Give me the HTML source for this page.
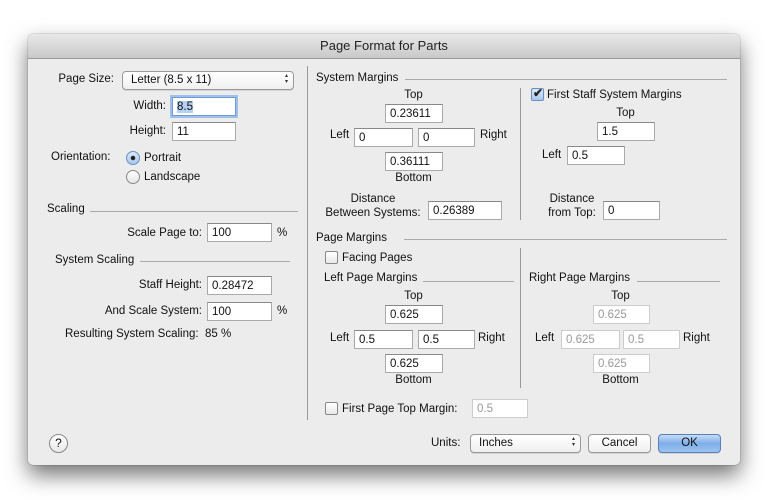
<!DOCTYPE html>
<html><head><style>
body{margin:0;width:768px;height:502px;background:#fff;position:relative;overflow:hidden;font-family:"Liberation Sans",sans-serif;font-size:11.5px;color:#111}
.win{position:absolute;left:28px;top:34px;width:712px;height:431px;background:#ececec;border-radius:5px;box-shadow:0 10px 22px rgba(0,0,0,.55),0 0 1px rgba(0,0,0,.6)}
.tb{position:absolute;left:28px;top:34px;width:712px;height:24px;border-radius:5px 5px 0 0;background:linear-gradient(#e8e8e8,#c9c9c9);border-bottom:1px solid #999;text-align:center;line-height:24px;font-size:13px;color:#222}
.t{position:absolute;line-height:14px;white-space:nowrap}
.r{text-align:right}
.c{text-align:center}
.in{position:absolute;height:17px;background:#fff;border:1px solid #aaa;border-top-color:#888;box-sizing:content-box;line-height:18px;padding-left:4px;font-size:11.5px}
.dis{color:#999;border-color:#ccc}
.hl{position:absolute;height:1px;background:#aaa}
.vl{position:absolute;width:1px;background:#999}
.btn{position:absolute;height:17px;border:1px solid #999;border-radius:4px;background:linear-gradient(#fff,#f0f0f0);line-height:17px;text-align:center;box-shadow:0 1px 0 rgba(0,0,0,.1)}
.pop{text-align:left;padding-left:8px}
.pop:after{content:"\25B4\A\25BE";white-space:pre;position:absolute;right:5px;top:1px;font-size:6px;line-height:6px;color:#333}
.cb{position:absolute;width:11px;height:11px;border:1px solid #888;border-radius:2px;background:linear-gradient(#fff,#e8e8e8)}
.rad{position:absolute;width:12px;height:12px;border:1px solid #888;border-radius:50%;background:linear-gradient(#fff,#e6e6e6)}
</style></head><body>
<div class="win"></div>
<div class="tb">Page Format for Parts</div>

<div class="t r" style="left:30px;width:84px;top:72px">Page Size:</div>
<div class="btn pop" style="left:122px;top:71px;width:162px">Letter (8.5 x 11)</div>
<div class="t r" style="left:100px;width:66px;top:99px">Width:</div>
<div class="in" style="left:172px;top:97px;width:58px;border:1px solid #6f9ad6;box-shadow:0 0 0 2px #9fc0ea"><span style="background:#b6d0f2">8.5</span></div>
<div class="t r" style="left:100px;width:66px;top:124px">Height:</div>
<div class="in" style="left:172px;top:122px;width:58px">11</div>
<div class="t" style="left:51px;top:150px">Orientation:</div>
<div class="rad" style="left:126px;top:151px;background:radial-gradient(#222 0 2px,transparent 2.5px),linear-gradient(#d9e8fb,#a9c8ef);border-color:#6a8fc0"></div>
<div class="t" style="left:144px;top:151px">Portrait</div>
<div class="rad" style="left:126px;top:170px"></div>
<div class="t" style="left:144px;top:170px">Landscape</div>

<div class="t" style="left:47px;top:202px">Scaling</div>
<div class="hl" style="left:90px;width:208px;top:211px"></div>
<div class="t r" style="left:90px;width:112px;top:226px">Scale Page to:</div>
<div class="in" style="left:207px;top:223px;width:59px">100</div>
<div class="t" style="left:277px;top:226px">%</div>
<div class="t" style="left:55px;top:253px">System Scaling</div>
<div class="hl" style="left:140px;width:150px;top:261px"></div>
<div class="t r" style="left:90px;width:112px;top:278px">Staff Height:</div>
<div class="in" style="left:207px;top:276px;width:59px">0.28472</div>
<div class="t r" style="left:80px;width:122px;top:304px">And Scale System:</div>
<div class="in" style="left:207px;top:302px;width:59px">100</div>
<div class="t" style="left:277px;top:304px">%</div>
<div class="t" style="left:65px;top:327px">Resulting System Scaling:&nbsp; 85 %</div>

<div class="vl" style="left:307px;top:66px;height:354px"></div>

<div class="t" style="left:316px;top:71px">System Margins</div>
<div class="hl" style="left:405px;width:322px;top:79px"></div>
<div class="t c" style="left:385px;width:57px;top:88px">Top</div>
<div class="in" style="left:385px;top:104px;width:52px">0.23611</div>
<div class="t" style="left:330px;top:128px">Left</div>
<div class="in" style="left:354px;top:128px;width:53px">0</div>
<div class="in" style="left:418px;top:128px;width:51px">0</div>
<div class="t" style="left:480px;top:128px">Right</div>
<div class="in" style="left:385px;top:152px;width:52px">0.36111</div>
<div class="t c" style="left:385px;width:57px;top:171px">Bottom</div>
<div class="t c" style="left:320px;width:106px;top:192px">Distance<br>Between Systems:</div>
<div class="in" style="left:428px;top:201px;width:68px">0.26389</div>

<div class="vl" style="left:520px;top:88px;height:132px"></div>
<div class="cb" style="left:531px;top:88px;background:linear-gradient(#d9e8fb,#a9c8ef);border-color:#6a8fc0"></div>
<div class="t" style="left:533px;top:86px;font-size:12px;font-weight:bold;color:#222">&#10004;</div>
<div class="t" style="left:547px;top:88px">First Staff System Margins</div>
<div class="t c" style="left:597px;width:57px;top:106px">Top</div>
<div class="in" style="left:597px;top:122px;width:52px">1.5</div>
<div class="t" style="left:542px;top:148px">Left</div>
<div class="in" style="left:567px;top:146px;width:52px">0.5</div>
<div class="t c" style="left:538px;width:68px;top:192px">Distance<br>from Top:</div>
<div class="in" style="left:603px;top:201px;width:51px">0</div>

<div class="t" style="left:316px;top:231px">Page Margins</div>
<div class="hl" style="left:404px;width:323px;top:239px"></div>
<div class="cb" style="left:325px;top:251px"></div>
<div class="t" style="left:342px;top:251px">Facing Pages</div>
<div class="t" style="left:324px;top:271px">Left Page Margins</div>
<div class="hl" style="left:423px;width:91px;top:281px"></div>
<div class="t c" style="left:385px;width:57px;top:289px">Top</div>
<div class="in" style="left:385px;top:305px;width:52px">0.625</div>
<div class="t" style="left:330px;top:331px">Left</div>
<div class="in" style="left:354px;top:330px;width:53px">0.5</div>
<div class="in" style="left:418px;top:330px;width:51px">0.5</div>
<div class="t" style="left:478px;top:331px">Right</div>
<div class="in" style="left:385px;top:354px;width:52px">0.625</div>
<div class="t c" style="left:385px;width:57px;top:373px">Bottom</div>

<div class="vl" style="left:520px;top:248px;height:140px"></div>
<div class="t" style="left:529px;top:271px">Right Page Margins</div>
<div class="hl" style="left:637px;width:83px;top:281px"></div>
<div class="t c" style="left:592px;width:57px;top:289px">Top</div>
<div class="in dis" style="left:593px;top:305px;width:51px">0.625</div>
<div class="t" style="left:535px;top:331px">Left</div>
<div class="in dis" style="left:561px;top:330px;width:53px">0.625</div>
<div class="in dis" style="left:623px;top:330px;width:51px">0.5</div>
<div class="t" style="left:683px;top:331px">Right</div>
<div class="in dis" style="left:593px;top:354px;width:51px">0.625</div>
<div class="t c" style="left:592px;width:57px;top:373px">Bottom</div>

<div class="cb" style="left:325px;top:402px"></div>
<div class="t" style="left:342px;top:402px">First Page Top Margin:</div>
<div class="in dis" style="left:472px;top:399px;width:50px">0.5</div>

<div style="position:absolute;left:49px;top:434px;width:17px;height:17px;border:1px solid #888;border-radius:50%;background:linear-gradient(#fff,#e8e8e8);text-align:center;line-height:17px;font-size:12px">?</div>
<div class="t" style="left:431px;top:436px">Units:</div>
<div class="btn pop" style="left:470px;top:434px;width:101px">Inches</div>
<div class="btn" style="left:588px;top:434px;width:61px">Cancel</div>
<div class="btn" style="left:658px;top:434px;width:61px;border-color:#5a7fb5;background:linear-gradient(#c6dcf7,#7eaee8 50%,#9cc3f0)">OK</div>
</body></html>
